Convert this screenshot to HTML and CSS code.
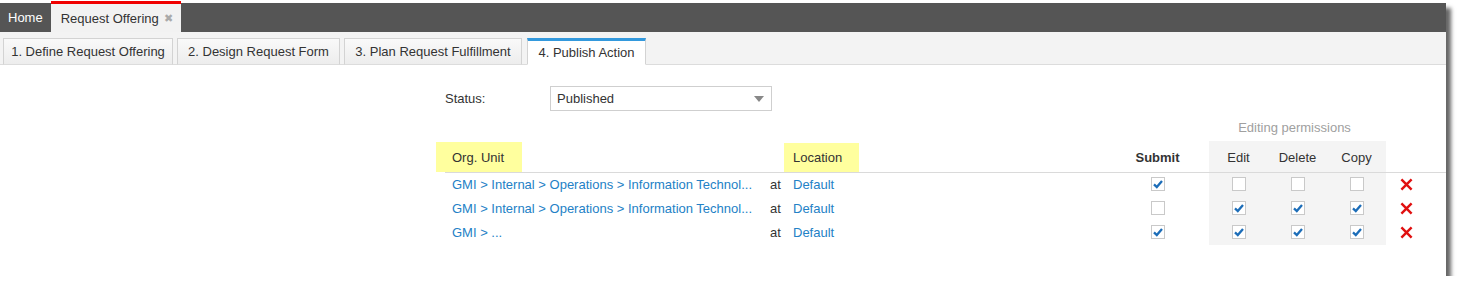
FILE: index.html
```html
<!DOCTYPE html>
<html>
<head>
<meta charset="utf-8">
<link rel="stylesheet" href="styles.css">
</head>
<body>
<div class="frame">
  <div class="topbar">
    <div class="ttab">Home</div>
    <div class="ttab active">Request Offering <span class="close">&#x2716;</span></div>
  </div>
  <div class="steps">
    <div class="step s1">1. Define Request Offering</div>
    <div class="step s2">2. Design Request Form</div>
    <div class="step s3">3. Plan Request Fulfillment</div>
    <div class="step s4 current">4. Publish Action</div>
  </div>
  <div class="content">
    <div class="status-row">
      <div class="status-label">Status:</div>
      <div class="select">Published<span class="caret"></span></div>
    </div>
    <div class="grid">
      <div class="permbg"></div>
      <div class="caption">Editing permissions</div>

      <div class="h c-org"><span class="hl">Org. Unit</span></div>
      <div class="h c-loc"><span class="hl">Location</span></div>
      <div class="h c-sub bold">Submit</div>
      <div class="h c-edit">Edit</div>
      <div class="h c-del">Delete</div>
      <div class="h c-copy">Copy</div>
      <div class="hline"></div>

      <div class="d r1 c-org"><a>GMI &gt; Internal &gt; Operations &gt; Information Technol...</a></div>
      <div class="d r1 c-at">at</div>
      <div class="d r1 c-loc"><a>Default</a></div>
      <div class="d r1 c-sub"><svg class="cb" viewBox="0 0 14 14"><rect x="0.5" y="0.5" width="13" height="13" fill="#fff" stroke="#c9c9c9"/><path d="M3 7.3 L5.8 10 L11 4" fill="none" stroke="#1c6db8" stroke-width="2.3"/></svg></div>
      <div class="d r1 c-edit"><svg class="cb" viewBox="0 0 14 14"><rect x="0.5" y="0.5" width="13" height="13" fill="#fff" stroke="#c9c9c9"/></svg></div>
      <div class="d r1 c-del"><svg class="cb" viewBox="0 0 14 14"><rect x="0.5" y="0.5" width="13" height="13" fill="#fff" stroke="#c9c9c9"/></svg></div>
      <div class="d r1 c-copy"><svg class="cb" viewBox="0 0 14 14"><rect x="0.5" y="0.5" width="13" height="13" fill="#fff" stroke="#c9c9c9"/></svg></div>
      <div class="d r1 c-x"><svg class="xi" viewBox="0 0 14 14"><path d="M1.5 1.5 L12.5 12.5 M12.5 1.5 L1.5 12.5" stroke="#e01010" stroke-width="2.6"/></svg></div>

      <div class="d r2 c-org"><a>GMI &gt; Internal &gt; Operations &gt; Information Technol...</a></div>
      <div class="d r2 c-at">at</div>
      <div class="d r2 c-loc"><a>Default</a></div>
      <div class="d r2 c-sub"><svg class="cb" viewBox="0 0 14 14"><rect x="0.5" y="0.5" width="13" height="13" fill="#fff" stroke="#c9c9c9"/></svg></div>
      <div class="d r2 c-edit"><svg class="cb" viewBox="0 0 14 14"><rect x="0.5" y="0.5" width="13" height="13" fill="#fff" stroke="#c9c9c9"/><path d="M3 7.3 L5.8 10 L11 4" fill="none" stroke="#1c6db8" stroke-width="2.3"/></svg></div>
      <div class="d r2 c-del"><svg class="cb" viewBox="0 0 14 14"><rect x="0.5" y="0.5" width="13" height="13" fill="#fff" stroke="#c9c9c9"/><path d="M3 7.3 L5.8 10 L11 4" fill="none" stroke="#1c6db8" stroke-width="2.3"/></svg></div>
      <div class="d r2 c-copy"><svg class="cb" viewBox="0 0 14 14"><rect x="0.5" y="0.5" width="13" height="13" fill="#fff" stroke="#c9c9c9"/><path d="M3 7.3 L5.8 10 L11 4" fill="none" stroke="#1c6db8" stroke-width="2.3"/></svg></div>
      <div class="d r2 c-x"><svg class="xi" viewBox="0 0 14 14"><path d="M1.5 1.5 L12.5 12.5 M12.5 1.5 L1.5 12.5" stroke="#e01010" stroke-width="2.6"/></svg></div>

      <div class="d r3 c-org"><a>GMI &gt; ...</a></div>
      <div class="d r3 c-at">at</div>
      <div class="d r3 c-loc"><a>Default</a></div>
      <div class="d r3 c-sub"><svg class="cb" viewBox="0 0 14 14"><rect x="0.5" y="0.5" width="13" height="13" fill="#fff" stroke="#c9c9c9"/><path d="M3 7.3 L5.8 10 L11 4" fill="none" stroke="#1c6db8" stroke-width="2.3"/></svg></div>
      <div class="d r3 c-edit"><svg class="cb" viewBox="0 0 14 14"><rect x="0.5" y="0.5" width="13" height="13" fill="#fff" stroke="#c9c9c9"/><path d="M3 7.3 L5.8 10 L11 4" fill="none" stroke="#1c6db8" stroke-width="2.3"/></svg></div>
      <div class="d r3 c-del"><svg class="cb" viewBox="0 0 14 14"><rect x="0.5" y="0.5" width="13" height="13" fill="#fff" stroke="#c9c9c9"/><path d="M3 7.3 L5.8 10 L11 4" fill="none" stroke="#1c6db8" stroke-width="2.3"/></svg></div>
      <div class="d r3 c-copy"><svg class="cb" viewBox="0 0 14 14"><rect x="0.5" y="0.5" width="13" height="13" fill="#fff" stroke="#c9c9c9"/><path d="M3 7.3 L5.8 10 L11 4" fill="none" stroke="#1c6db8" stroke-width="2.3"/></svg></div>
      <div class="d r3 c-x"><svg class="xi" viewBox="0 0 14 14"><path d="M1.5 1.5 L12.5 12.5 M12.5 1.5 L1.5 12.5" stroke="#e01010" stroke-width="2.6"/></svg></div>
    </div>
  </div>
</div>
</body>
</html>
```
FILE: styles.css
```css
html, body {
  margin: 0;
  padding: 0;
  background: #fff;
}
body {
  padding-top: 3px;
  font-family: "Liberation Sans", Arial, sans-serif;
  font-size: 13px;
  color: #333;
}
.frame {
  width: 1446px;
  height: 273px;
  background: #fff;
  box-shadow: 5px 5px 4px rgba(0, 0, 0, 0.6);
  display: flex;
  flex-direction: column;
}
.topbar {
  flex-shrink: 0;
  height: 29px;
  background: #555;
  display: flex;
  align-items: stretch;
}
.ttab {
  display: flex;
  align-items: center;
  padding: 0 8px;
  color: #fff;
  line-height: 15px;
}
.ttab.active {
  margin-top: -2px;
  border-top: 3px solid #f00000;
  background: #f2f2f2;
  color: #333;
  width: 130px;
  box-sizing: border-box;
  padding: 0 0 0 10px;
  gap: 5px;
}
.close {
  color: #aaa;
  font-size: 11px;
}
.steps {
  flex-shrink: 0;
  height: 32px;
  background: #f3f3f3;
  border-bottom: 1px solid #dcdcdc;
  display: flex;
  align-items: flex-end;
  gap: 4px;
  padding-left: 3px;
}
.step {
  box-sizing: border-box;
  height: 27px;
  margin-bottom: -1px;
  border: 1px solid #d3d3d3;
  border-bottom-color: #dcdcdc;
  background: linear-gradient(#f9f9f9, #ededed);
  display: flex;
  align-items: center;
  justify-content: center;
  white-space: nowrap;
  line-height: 15px;
}
.s1 { width: 170px; }
.s2 { width: 163px; }
.s3 { width: 178px; }
.s4 { width: 119px; margin-left: 1px; }
.step.current {
  background: #fff;
  border-top: 3px solid #3399dd;
  border-bottom-color: #fff;
}
.content {
  padding-top: 21px;
  padding-left: 436px;
}
.status-row {
  display: flex;
  align-items: center;
  height: 25px;
}
.status-label {
  width: 105px;
  padding-left: 9px;
}
.select {
  border: 1px solid #cfcfcf;
  display: flex;
  align-items: center;
  justify-content: space-between;
  padding: 0 6px 0 6px;
  box-sizing: border-box;
  width: 222px;
  height: 25px;
}
.caret {
  width: 0;
  height: 0;
  border-left: 5px solid transparent;
  border-right: 5px solid transparent;
  border-top: 6px solid #888;
  margin-right: 1px;
}
.grid {
  display: grid;
  grid-template-columns: 334px 14px 75px 261px 75px 14px 59px 59px 59px 40px 20px;
  grid-template-rows: 30px 31px 1px 24px 24px 24px;
}
.permbg {
  grid-column: 7 / 10;
  grid-row: 2 / 7;
  background: #f4f4f4;
}
.caption {
  grid-column: 7 / 10;
  grid-row: 1;
  text-align: center;
  color: #a0a0a0;
  align-self: end;
  padding-bottom: 6px;
  padding-right: 6px;
  line-height: 15px;
}
.h {
  grid-row: 2;
  display: flex;
  align-items: flex-end;
  justify-content: center;
  padding-bottom: 7px;
  line-height: 15px;
}
.h.c-org, .h.c-loc {
  justify-content: flex-start;
  padding-bottom: 0;
  align-items: stretch;
}
.hl {
  background: #ffff9e;
  display: flex;
  align-items: flex-end;
  padding: 0 18px 7px 16px;
  margin-top: 1px;
}
.h.c-loc .hl {
  padding-left: 9px;
  padding-right: 17px;
  margin-top: 2px;
}
.bold {
  font-weight: bold;
}
.hline {
  grid-row: 3;
  grid-column: 1 / -1;
  margin-left: 9px;
  background: #dadada;
}
.r1 { grid-row: 4; }
.r2 { grid-row: 5; }
.r3 { grid-row: 6; }
.c-org { grid-column: 1; }
.c-at { grid-column: 2; }
.c-loc { grid-column: 3; }
.c-sub { grid-column: 5; }
.c-edit { grid-column: 7; }
.c-del { grid-column: 8; }
.c-copy { grid-column: 9; }
.c-x { grid-column: 10; }
.d {
  display: flex;
  align-items: center;
  justify-content: center;
  line-height: 15px;
  padding-bottom: 2px;
  white-space: nowrap;
}
.d.c-org {
  justify-content: flex-start;
  padding-left: 16px;
}
.d.c-loc {
  justify-content: flex-start;
  padding-left: 9px;
}
.d.c-at {
  justify-content: flex-start;
}
a {
  color: #2381c6;
  text-decoration: none;
}
.cb {
  width: 14px;
  height: 14px;
  display: block;
}
.xi {
  width: 13px;
  height: 13px;
  display: block;
}
```
